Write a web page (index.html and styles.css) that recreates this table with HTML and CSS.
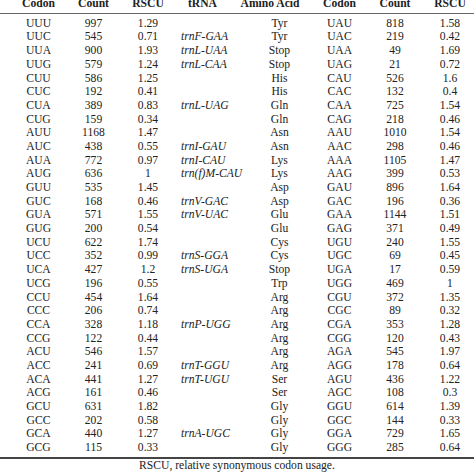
FILE: index.html
```html
<!DOCTYPE html>
<html>
<head>
<meta charset="utf-8">
<link rel="stylesheet" href="styles.css">
</head>
<body>
<div class="tbl">
  <div class="row head">
    <div class="c c1">Codon</div><div class="c c2">Count</div><div class="c c3">RSCU</div><div class="c c4 h4">tRNA</div><div class="c c5 h5">Amino Acid</div><div class="c c6">Codon</div><div class="c c7">Count</div><div class="c c8">RSCU</div>
  </div>
  <div class="body">
    <div class="row"><div class="c c1">UUU</div><div class="c c2">997</div><div class="c c3">1.29</div><div class="c c4"></div><div class="c c5">Tyr</div><div class="c c6">UAU</div><div class="c c7">818</div><div class="c c8">1.58</div></div>
    <div class="row"><div class="c c1">UUC</div><div class="c c2">545</div><div class="c c3">0.71</div><div class="c c4">trnF-GAA</div><div class="c c5">Tyr</div><div class="c c6">UAC</div><div class="c c7">219</div><div class="c c8">0.42</div></div>
    <div class="row"><div class="c c1">UUA</div><div class="c c2">900</div><div class="c c3">1.93</div><div class="c c4">trnL-UAA</div><div class="c c5">Stop</div><div class="c c6">UAA</div><div class="c c7">49</div><div class="c c8">1.69</div></div>
    <div class="row"><div class="c c1">UUG</div><div class="c c2">579</div><div class="c c3">1.24</div><div class="c c4">trnL-CAA</div><div class="c c5">Stop</div><div class="c c6">UAG</div><div class="c c7">21</div><div class="c c8">0.72</div></div>
    <div class="row"><div class="c c1">CUU</div><div class="c c2">586</div><div class="c c3">1.25</div><div class="c c4"></div><div class="c c5">His</div><div class="c c6">CAU</div><div class="c c7">526</div><div class="c c8">1.6</div></div>
    <div class="row"><div class="c c1">CUC</div><div class="c c2">192</div><div class="c c3">0.41</div><div class="c c4"></div><div class="c c5">His</div><div class="c c6">CAC</div><div class="c c7">132</div><div class="c c8">0.4</div></div>
    <div class="row"><div class="c c1">CUA</div><div class="c c2">389</div><div class="c c3">0.83</div><div class="c c4">trnL-UAG</div><div class="c c5">Gln</div><div class="c c6">CAA</div><div class="c c7">725</div><div class="c c8">1.54</div></div>
    <div class="row"><div class="c c1">CUG</div><div class="c c2">159</div><div class="c c3">0.34</div><div class="c c4"></div><div class="c c5">Gln</div><div class="c c6">CAG</div><div class="c c7">218</div><div class="c c8">0.46</div></div>
    <div class="row"><div class="c c1">AUU</div><div class="c c2">1168</div><div class="c c3">1.47</div><div class="c c4"></div><div class="c c5">Asn</div><div class="c c6">AAU</div><div class="c c7">1010</div><div class="c c8">1.54</div></div>
    <div class="row"><div class="c c1">AUC</div><div class="c c2">438</div><div class="c c3">0.55</div><div class="c c4">trnI-GAU</div><div class="c c5">Asn</div><div class="c c6">AAC</div><div class="c c7">298</div><div class="c c8">0.46</div></div>
    <div class="row"><div class="c c1">AUA</div><div class="c c2">772</div><div class="c c3">0.97</div><div class="c c4">trnI-CAU</div><div class="c c5">Lys</div><div class="c c6">AAA</div><div class="c c7">1105</div><div class="c c8">1.47</div></div>
    <div class="row"><div class="c c1">AUG</div><div class="c c2">636</div><div class="c c3">1</div><div class="c c4">trn(f)M-CAU</div><div class="c c5">Lys</div><div class="c c6">AAG</div><div class="c c7">399</div><div class="c c8">0.53</div></div>
    <div class="row"><div class="c c1">GUU</div><div class="c c2">535</div><div class="c c3">1.45</div><div class="c c4"></div><div class="c c5">Asp</div><div class="c c6">GAU</div><div class="c c7">896</div><div class="c c8">1.64</div></div>
    <div class="row"><div class="c c1">GUC</div><div class="c c2">168</div><div class="c c3">0.46</div><div class="c c4">trnV-GAC</div><div class="c c5">Asp</div><div class="c c6">GAC</div><div class="c c7">196</div><div class="c c8">0.36</div></div>
    <div class="row"><div class="c c1">GUA</div><div class="c c2">571</div><div class="c c3">1.55</div><div class="c c4">trnV-UAC</div><div class="c c5">Glu</div><div class="c c6">GAA</div><div class="c c7">1144</div><div class="c c8">1.51</div></div>
    <div class="row"><div class="c c1">GUG</div><div class="c c2">200</div><div class="c c3">0.54</div><div class="c c4"></div><div class="c c5">Glu</div><div class="c c6">GAG</div><div class="c c7">371</div><div class="c c8">0.49</div></div>
    <div class="row"><div class="c c1">UCU</div><div class="c c2">622</div><div class="c c3">1.74</div><div class="c c4"></div><div class="c c5">Cys</div><div class="c c6">UGU</div><div class="c c7">240</div><div class="c c8">1.55</div></div>
    <div class="row"><div class="c c1">UCC</div><div class="c c2">352</div><div class="c c3">0.99</div><div class="c c4">trnS-GGA</div><div class="c c5">Cys</div><div class="c c6">UGC</div><div class="c c7">69</div><div class="c c8">0.45</div></div>
    <div class="row"><div class="c c1">UCA</div><div class="c c2">427</div><div class="c c3">1.2</div><div class="c c4">trnS-UGA</div><div class="c c5">Stop</div><div class="c c6">UGA</div><div class="c c7">17</div><div class="c c8">0.59</div></div>
    <div class="row"><div class="c c1">UCG</div><div class="c c2">196</div><div class="c c3">0.55</div><div class="c c4"></div><div class="c c5">Trp</div><div class="c c6">UGG</div><div class="c c7">469</div><div class="c c8">1</div></div>
    <div class="row"><div class="c c1">CCU</div><div class="c c2">454</div><div class="c c3">1.64</div><div class="c c4"></div><div class="c c5">Arg</div><div class="c c6">CGU</div><div class="c c7">372</div><div class="c c8">1.35</div></div>
    <div class="row"><div class="c c1">CCC</div><div class="c c2">206</div><div class="c c3">0.74</div><div class="c c4"></div><div class="c c5">Arg</div><div class="c c6">CGC</div><div class="c c7">89</div><div class="c c8">0.32</div></div>
    <div class="row"><div class="c c1">CCA</div><div class="c c2">328</div><div class="c c3">1.18</div><div class="c c4">trnP-UGG</div><div class="c c5">Arg</div><div class="c c6">CGA</div><div class="c c7">353</div><div class="c c8">1.28</div></div>
    <div class="row"><div class="c c1">CCG</div><div class="c c2">122</div><div class="c c3">0.44</div><div class="c c4"></div><div class="c c5">Arg</div><div class="c c6">CGG</div><div class="c c7">120</div><div class="c c8">0.43</div></div>
    <div class="row"><div class="c c1">ACU</div><div class="c c2">546</div><div class="c c3">1.57</div><div class="c c4"></div><div class="c c5">Arg</div><div class="c c6">AGA</div><div class="c c7">545</div><div class="c c8">1.97</div></div>
    <div class="row"><div class="c c1">ACC</div><div class="c c2">241</div><div class="c c3">0.69</div><div class="c c4">trnT-GGU</div><div class="c c5">Arg</div><div class="c c6">AGG</div><div class="c c7">178</div><div class="c c8">0.64</div></div>
    <div class="row"><div class="c c1">ACA</div><div class="c c2">441</div><div class="c c3">1.27</div><div class="c c4">trnT-UGU</div><div class="c c5">Ser</div><div class="c c6">AGU</div><div class="c c7">436</div><div class="c c8">1.22</div></div>
    <div class="row"><div class="c c1">ACG</div><div class="c c2">161</div><div class="c c3">0.46</div><div class="c c4"></div><div class="c c5">Ser</div><div class="c c6">AGC</div><div class="c c7">108</div><div class="c c8">0.3</div></div>
    <div class="row"><div class="c c1">GCU</div><div class="c c2">631</div><div class="c c3">1.82</div><div class="c c4"></div><div class="c c5">Gly</div><div class="c c6">GGU</div><div class="c c7">614</div><div class="c c8">1.39</div></div>
    <div class="row"><div class="c c1">GCC</div><div class="c c2">202</div><div class="c c3">0.58</div><div class="c c4"></div><div class="c c5">Gly</div><div class="c c6">GGC</div><div class="c c7">144</div><div class="c c8">0.33</div></div>
    <div class="row"><div class="c c1">GCA</div><div class="c c2">440</div><div class="c c3">1.27</div><div class="c c4">trnA-UGC</div><div class="c c5">Gly</div><div class="c c6">GGA</div><div class="c c7">729</div><div class="c c8">1.65</div></div>
    <div class="row"><div class="c c1">GCG</div><div class="c c2">115</div><div class="c c3">0.33</div><div class="c c4"></div><div class="c c5">Gly</div><div class="c c6">GGG</div><div class="c c7">285</div><div class="c c8">0.64</div></div>
  </div>
  <div class="caption">RSCU, relative synonymous codon usage.</div>
</div>
</body>
</html>
```
FILE: styles.css
```css
html, body {
  margin: 0;
  padding: 0;
  background: #fff;
}
body {
  width: 474px;
  height: 474px;
  overflow: hidden;
  font-family: "Liberation Serif", "Times New Roman", serif;
  font-size: 11.6px;
  color: #222;
}
.tbl {
  margin-top: -3px;
}
.row {
  display: grid;
  grid-template-columns: 77px 33px 76px 62px 63px 57px 54px 52px;
  height: 13.7px;
  line-height: 13.7px;
}
.c {
  display: flex;
  justify-content: center;
  white-space: nowrap;
}
.c4 {
  justify-content: flex-start;
  font-style: italic;
  margin-left: -5px;
}
.c8 {
  padding-left: 4px;
}
.head {
  font-weight: bold;
  height: 13.7px;
  padding-bottom: 2.3px;
  border-bottom: 1px solid #666;
}
.head .c4 {
  font-style: normal;
  margin-left: 2px;
}
.head .h5 {
  padding-right: 19px;
}
.body {
  padding-top: 2.8px;
  padding-bottom: 2.1px;
  border-bottom: 2px solid #444;
}
.caption {
  margin-top: 0.5px;
  text-align: center;
  line-height: 13.7px;
}
```
